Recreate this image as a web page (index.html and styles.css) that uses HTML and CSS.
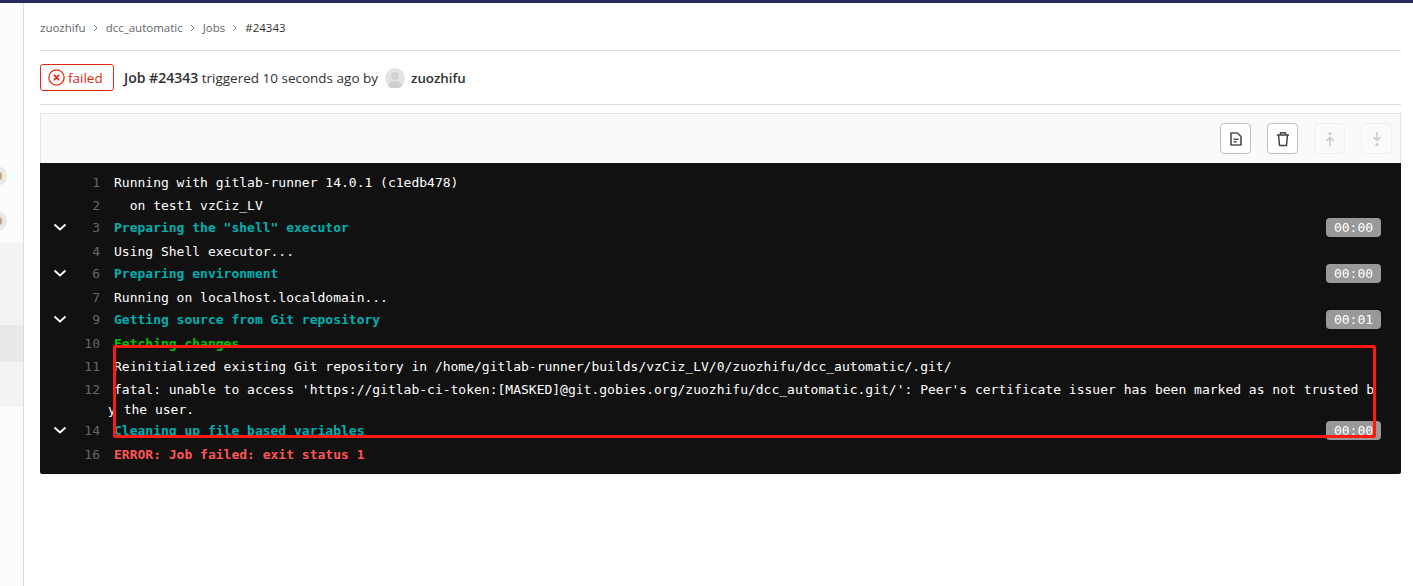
FILE: index.html
```html
<!DOCTYPE html>
<html lang="en">
<head>
<meta charset="utf-8">
<title>Job #24343</title>
<link rel="stylesheet" href="styles.css">
</head>
<body>
<div class="topbar"></div>
<div class="layout">
  <aside class="sidebar">
    <div class="side-block side-block-a">
      <span class="side-badge"><i></i></span>
      <span class="side-badge"><i></i></span>
    </div>
    <div class="side-block side-block-b"></div>
    <div class="side-block side-block-c"></div>
    <div class="side-block side-block-d"></div>
  </aside>
  <main class="content">
    <nav class="crumbs">
      <a>zuozhifu</a><svg class="sep" viewBox="0 0 8 8"><path d="M3 1l3 3-3 3" fill="none" stroke="#888" stroke-width="1"/></svg>
      <a>dcc_automatic</a><svg class="sep" viewBox="0 0 8 8"><path d="M3 1l3 3-3 3" fill="none" stroke="#888" stroke-width="1"/></svg>
      <a>Jobs</a><svg class="sep" viewBox="0 0 8 8"><path d="M3 1l3 3-3 3" fill="none" stroke="#888" stroke-width="1"/></svg>
      <a class="current">#24343</a>
    </nav>
    <header class="jobhead">
      <span class="status">
        <svg class="status-icon" viewBox="0 0 16 16"><circle cx="8" cy="8" r="7.2" fill="none" stroke="#dd2b0e" stroke-width="1.2"/><path d="M6 6l4 4M10 6l-4 4" stroke="#dd2b0e" stroke-width="1.7" stroke-linecap="round"/></svg>
        failed
      </span>
      <span class="headline"><b>Job #24343</b> triggered 10 seconds ago by</span>
      <span class="avatar"><svg viewBox="0 0 20 20"><circle cx="10" cy="10" r="10" fill="#e4e4e4"/><circle cx="10" cy="8" r="4" fill="#d2d2d2"/><path d="M3 18c1-4 4-5 7-5s6 1 7 5a10 10 0 0 1-14 0z" fill="#cfcfcf"/></svg></span>
      <b class="user">zuozhifu</b>
    </header>
    <div class="toolbar">
      <button class="tool"><svg viewBox="0 0 16 16"><path d="M3 2h6.5L13 5.5V14H3z" fill="none" stroke="#555" stroke-width="1.7" stroke-linejoin="round"/><path d="M5.5 8.2h5M5.5 10.8h3.2" stroke="#555" stroke-width="1.5"/></svg></button>
      <button class="tool"><svg viewBox="0 0 16 16"><path d="M2 4h12M5.5 3.8V1.8h5v2M3.6 4.5l.9 10h7l.9-10" fill="none" stroke="#444" stroke-width="1.5" stroke-linejoin="round"/></svg></button>
      <button class="tool off"><svg viewBox="0 0 16 16"><circle cx="8" cy="2.5" r="1.6" fill="#ccc"/><path d="M8 15V7M4.5 10L8 6.5l3.5 3.5" fill="none" stroke="#ccc" stroke-width="1.7"/></svg></button>
      <button class="tool off"><svg viewBox="0 0 16 16"><circle cx="8" cy="13.5" r="1.6" fill="#ccc"/><path d="M8 1v8M4.5 6L8 9.5 11.5 6" fill="none" stroke="#ccc" stroke-width="1.7"/></svg></button>
    </div>
    <div class="log">
      <div class="line"><i class="num">1</i><span>Running with gitlab-runner 14.0.1 (c1edb478)</span></div>
      <div class="line"><i class="num">2</i><span>  on test1 vzCiz_LV</span></div>
      <div class="line sect"><svg class="chev" viewBox="0 0 14 8"><path d="M1.5 1.5L7 6.5l5.5-5" fill="none" stroke="#fff" stroke-width="1.8"/></svg><i class="num">3</i><span class="cyan">Preparing the "shell" executor</span><em class="dur">00:00</em></div>
      <div class="line"><i class="num">4</i><span>Using Shell executor...</span></div>
      <div class="line sect"><svg class="chev" viewBox="0 0 14 8"><path d="M1.5 1.5L7 6.5l5.5-5" fill="none" stroke="#fff" stroke-width="1.8"/></svg><i class="num">6</i><span class="cyan">Preparing environment</span><em class="dur">00:00</em></div>
      <div class="line"><i class="num">7</i><span>Running on localhost.localdomain...</span></div>
      <div class="line sect"><svg class="chev" viewBox="0 0 14 8"><path d="M1.5 1.5L7 6.5l5.5-5" fill="none" stroke="#fff" stroke-width="1.8"/></svg><i class="num">9</i><span class="cyan">Getting source from Git repository</span><em class="dur">00:01</em></div>
      <div class="line"><i class="num">10</i><span class="green">Fetching changes</span></div>
      <div class="line"><i class="num">11</i><span>Reinitialized existing Git repository in /home/gitlab-runner/builds/vzCiz_LV/0/zuozhifu/dcc_automatic/.git/</span></div>
      <div class="line wrap"><i class="num">12</i><span>fatal: unable to access 'https://gitlab-ci-token:[MASKED]@git.gobies.org/zuozhifu/dcc_automatic.git/': Peer's certificate issuer has been marked as not trusted b<br><span class="outdent">y the user.</span></span></div>
      <div class="line sect"><svg class="chev" viewBox="0 0 14 8"><path d="M1.5 1.5L7 6.5l5.5-5" fill="none" stroke="#fff" stroke-width="1.8"/></svg><i class="num">14</i><span class="cyan">Cleaning up file based variables</span><em class="dur">00:00</em></div>
      <div class="line"><i class="num">16</i><span class="red">ERROR: Job failed: exit status 1</span></div>
      <div class="annotation"></div>
    </div>
  </main>
</div>
</body>
</html>
```
FILE: styles.css
```css
* { box-sizing: border-box; }
html, body { margin: 0; height: 100%; background: #fff; overflow: hidden; }
body { font-family: "Open Sans", "Noto Sans", sans-serif; font-size: 14px; color: #303030; }
.topbar { height: 3px; background: #292961; }
.layout { display: flex; height: 583px; }
.sidebar { width: 24px; flex: none; background: #fbfbfb; border-right: 1px solid #dcdcdc; position: relative; padding-top: 240px; overflow: hidden; }
.side-block { width: 23px; }
.side-block-a { position: absolute; top: 0; left: 0; height: 240px; }
.side-badge { position: absolute; left: -13px; width: 20px; height: 20px; border-radius: 50%; background: #e8e8e8; }
.side-badge i { position: absolute; right: 5px; top: 6px; width: 7px; height: 8px; border-radius: 3px; background: #c9a27f; }
.side-badge:nth-child(1) { top: 163px; }
.side-badge:nth-child(2) { top: 208px; }
.side-block-b { height: 82px; background: #f3f3f3; }
.side-block-c { height: 37px; background: #e9e9e9; }
.side-block-d { height: 45px; background: #f3f3f3; }
.content { flex: none; width: 1361px; margin-left: 16px; margin-right: 12px; }
.crumbs { height: 48px; display: flex; align-items: center; font-size: 11.5px; color: #666; border-bottom: 1px solid #dcdcde; padding-top: 2px; }
.sep { width: 8px; height: 8px; margin: 0 7px 0 5px; }
.current { color: #303030; }
.jobhead { height: 54px; display: flex; align-items: center; border-bottom: 1px solid #dcdcde; font-size: 13.5px; color: #303030; }
.status { width: 74px; height: 27px; border: 1px solid #dd2b0e; border-radius: 3px; color: #dd2b0e; display: flex; align-items: center; padding-left: 7px; gap: 3px; font-size: 13.5px; }
.status-icon { width: 17px; height: 17px; }
.headline { margin-left: 10px; }
.headline b { font-weight: 600; font-size: 14px; }
.user { font-weight: 600; font-size: 13.3px; }
.avatar { width: 20px; height: 20px; margin: 0 6px 0 7px; }
.avatar svg { display: block; width: 20px; height: 20px; }
.toolbar { margin-top: 8px; height: 50px; background: #fafafa; border: 1px solid #e5e5e5; border-bottom: 0; display: flex; justify-content: flex-end; align-items: center; padding: 0 8px 0 0; gap: 16px; }
.tool { width: 31px; height: 31px; padding: 0; background: #fff; border: 1px solid #bfbfbf; border-radius: 4px; display: flex; align-items: center; justify-content: center; }
.tool svg { width: 16px; height: 16px; }
.tool.off { background: #fafafa; border-color: #eee; }
.log { position: relative; margin: 0; height: 311px; padding: 8px 0 0 0; background: #111; color: #fff; font-family: "DejaVu Sans Mono", "Liberation Mono", monospace; font-size: 13px; line-height: 23px; border-radius: 0 0 2px 2px; }
.line { display: flex; height: 23px; position: relative; white-space: pre; }
.line span { display: block; }
.line.wrap { height: 42px; }
.line.wrap > span { line-height: 20px; padding-top: 2px; }
.line.sect .num, .line.sect .cyan { margin-top: -1px; }
.outdent { margin-left: -6px; }
.num { width: 60px; flex: none; text-align: right; color: #666; font-style: normal; margin-right: 14px; }
.cyan { color: #00b0b0; font-weight: 700; }
.green { color: #00c400; font-weight: 700; }
.red { color: #f55; font-weight: 700; }
.chev { position: absolute; left: 13px; top: 6px; width: 14px; height: 8px; }
.dur { position: absolute; right: 20px; top: 1px; width: 55px; height: 19px; line-height: 19px; text-align: center; background: #999; color: #fff; border-radius: 4px; font-style: normal; }
.annotation { position: absolute; left: 73px; top: 182px; width: 1263px; height: 93px; border: 3px solid #ff1a10; border-radius: 2px; }
```
